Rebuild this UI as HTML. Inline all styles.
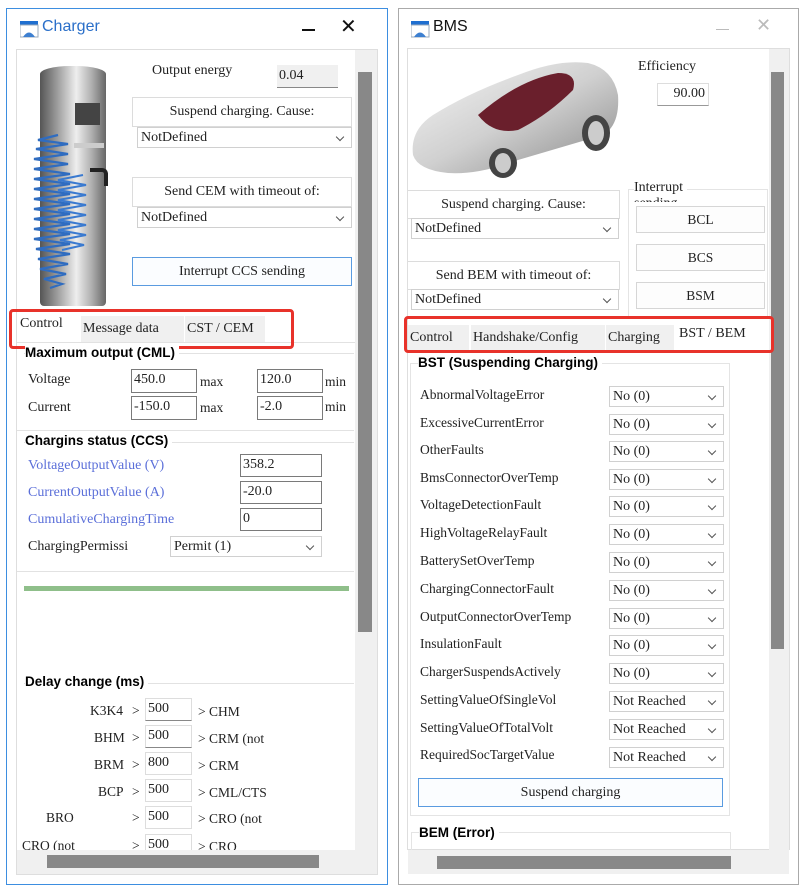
<!DOCTYPE html>
<html><head><meta charset="utf-8"><style>
*{box-sizing:border-box;margin:0;padding:0}
body{width:804px;height:888px;background:#fff;position:relative;overflow:hidden;font-family:"Liberation Serif","Noto Serif CJK SC",serif;font-size:13.5px;color:#222}
.a{position:absolute;white-space:nowrap}
.inp{position:absolute;border:1px solid #7a7a7a;background:#fff;padding:0 2px;line-height:20px;font-size:14px}
.sel{position:absolute;border:1px solid #d0d0d0;background:#fff;padding:0 3px;line-height:19px;font-size:14px}
.sel::after{content:"";position:absolute;right:8px;top:6px;width:5px;height:5px;border-right:1px solid #555;border-bottom:1px solid #555;transform:rotate(45deg)}
.box{position:absolute;border:1px solid #dcdcdc;background:#fff;text-align:center;font-size:14px}
.btn{position:absolute;border:1px solid #d6d6d6;background:#fdfdfd;text-align:center;font-size:13.5px}
.h{position:absolute;font-family:"Liberation Sans",sans-serif;font-weight:bold;font-size:13.5px;background:#fff;padding-right:4px;color:#000}
.ln{position:absolute;height:1px;background:#e2e2e2}
.red{position:absolute;border:3px solid #e8322a;border-radius:4px}
.tab{position:absolute;background:#f0f0f0;line-height:26px;font-size:14px;padding-left:2px}
.blue{color:#5b6fd9}
</style></head><body>

<!-- LEFT WINDOW -->
<div class="a" style="left:6px;top:8px;width:382px;height:877px;border:1px solid #3d8ee0"></div>
<svg class="a" style="left:20px;top:20px" width="19" height="18"><rect x="0" y="1" width="18" height="4" fill="#1f6fd0"/><rect x="0" y="5" width="18" height="12" fill="#fff" stroke="#9ab" stroke-width="1"/><path d="M3 17 Q9 8 15 17Z" fill="#3d7fd0"/></svg>
<div class="a" style="left:42px;top:18px;font-family:'Liberation Sans',sans-serif;font-size:16px;color:#2a6fc9">Charger</div>
<div class="a" style="left:302px;top:29px;width:13px;height:1.5px;background:#111"></div>
<div class="a" style="left:340px;top:14px;font-family:'Liberation Sans',sans-serif;font-size:20px;color:#111">✕</div>
<div class="a" style="left:16px;top:49px;width:362px;height:826px;border:1px solid #dedede;background:#fff"></div>
<!-- charger pole -->
<div class="a" style="left:40px;top:66px;width:66px;height:240px;border-radius:30px 30px 4px 4px/8px 8px 4px 4px;background:linear-gradient(90deg,#555 0%,#999 25%,#eee 55%,#aaa 80%,#666 100%)"></div>
<div class="a" style="left:75px;top:103px;width:25px;height:22px;background:#444"></div>
<div class="a" style="left:74px;top:143px;width:30px;height:5px;background:#ccc"></div>
<div class="a" style="left:90px;top:168px;width:18px;height:18px;border:4px solid #222;border-left:none;border-bottom:none;border-radius:0 6px 0 0"></div>
<svg class="a" style="left:28px;top:130px" width="70" height="165"><path d="M30 5 L10 10 L40 14 L8 19 L40 24 L6 29 L40 34 L6 39 L42 44 L6 49 L42 54 L6 59 L42 64 L6 69 L42 74 L6 79 L42 84 L6 89 L42 94 L6 99 L42 104 L6 109 L42 114 L8 119 L42 124 L10 129 L40 134 L12 139 L38 144 L16 149 L34 154 L22 158" fill="none" stroke="#2f6cc0" stroke-width="2.2"/><path d="M55 45 L30 50 L58 55 L30 60 L58 65 L30 70 L58 75 L30 80 L58 85 L30 90 L58 95 L30 100 L58 105 L32 110 L56 115 L34 120" fill="none" stroke="#3a7ad0" stroke-width="2"/></svg>
<div class="a" style="left:152px;top:63px;font-size:14px">Output energy</div>
<div class="a" style="left:277px;top:65px;width:61px;height:23px;background:#f0f0f0;border-bottom:1px solid #888;font-size:14px;padding:3px 2px">0.04</div>
<div class="box" style="left:132px;top:97px;width:220px;height:30px;line-height:28px">Suspend charging. Cause:</div>
<div class="sel" style="left:137px;top:127px;width:215px;height:21px">NotDefined</div>
<div class="box" style="left:132px;top:177px;width:220px;height:30px;line-height:28px">Send CEM with timeout of:</div>
<div class="sel" style="left:137px;top:207px;width:215px;height:21px">NotDefined</div>
<div class="box" style="left:132px;top:257px;width:220px;height:29px;line-height:27px;border-color:#5a9be0;background:#fbfdff">Interrupt CCS sending</div>
<div class="tab" style="left:18px;top:312px;width:63px;background:#fff;line-height:24px">Control</div>
<div class="tab" style="left:81px;top:316px;width:103px">Message data</div>
<div class="tab" style="left:185px;top:316px;width:80px">CST / CEM</div>
<div class="ln" style="left:17px;top:342px;width:340px"></div>
<div class="red" style="left:9px;top:309px;width:285px;height:40px"></div>
<div class="ln" style="left:24px;top:353px;width:330px"></div>
<div class="h" style="left:25px;top:345px">Maximum output (CML)</div>
<div class="a" style="left:28px;top:372px;font-size:14px">Voltage</div>
<div class="inp" style="left:131px;top:369px;width:66px;height:24px">450.0</div>
<div class="a" style="left:200px;top:374px">max</div>
<div class="inp" style="left:257px;top:369px;width:66px;height:24px">120.0</div>
<div class="a" style="left:325px;top:374px">min</div>
<div class="a" style="left:28px;top:400px;font-size:14px">Current</div>
<div class="inp" style="left:131px;top:396px;width:66px;height:24px">-150.0</div>
<div class="a" style="left:200px;top:400px">max</div>
<div class="inp" style="left:257px;top:396px;width:66px;height:24px">-2.0</div>
<div class="a" style="left:325px;top:399px">min</div>
<div class="ln" style="left:17px;top:430px;width:337px"></div>
<div class="ln" style="left:24px;top:442px;width:330px"></div>
<div class="h" style="left:25px;top:433px">Chargins status (CCS)</div>
<div class="a blue" style="left:28px;top:458px;font-size:14px">VoltageOutputValue (V)</div>
<div class="inp" style="left:240px;top:454px;width:82px;height:23px">358.2</div>
<div class="a blue" style="left:28px;top:485px;font-size:14px">CurrentOutputValue (A)</div>
<div class="inp" style="left:240px;top:481px;width:82px;height:23px">-20.0</div>
<div class="a blue" style="left:28px;top:512px;font-size:14px">CumulativeChargingTime</div>
<div class="inp" style="left:240px;top:508px;width:82px;height:23px">0</div>
<div class="a" style="left:28px;top:539px;font-size:14px">ChargingPermissi</div>
<div class="sel" style="left:170px;top:536px;width:152px;height:21px">Permit (1)</div>
<div class="ln" style="left:17px;top:571px;width:337px"></div>
<div class="a" style="left:24px;top:586px;width:325px;height:5px;background:#8fbf8a"></div>
<div class="ln" style="left:24px;top:683px;width:330px"></div>
<div class="h" style="left:25px;top:674px">Delay change (ms)</div>
<div class="a" style="left:90px;top:703px">K3K4</div>
<div class="a" style="left:94px;top:730px">BHM</div>
<div class="a" style="left:94px;top:757px">BRM</div>
<div class="a" style="left:98px;top:784px">BCP</div>
<div class="a" style="left:46px;top:810px">BRO</div>
<div class="a" style="left:22px;top:838px">CRO (not</div>
<div class="a" style="left:132px;top:703px">&gt;</div><div class="a" style="left:132px;top:730px">&gt;</div><div class="a" style="left:132px;top:757px">&gt;</div><div class="a" style="left:132px;top:784px">&gt;</div><div class="a" style="left:132px;top:810px">&gt;</div><div class="a" style="left:132px;top:838px">&gt;</div>
<div class="inp" style="left:145px;top:698px;width:47px;height:23px;border-color:#ddd #ddd #888 #ddd">500</div>
<div class="inp" style="left:145px;top:725px;width:47px;height:23px;border-color:#ddd #ddd #888 #ddd">500</div>
<div class="inp" style="left:145px;top:752px;width:47px;height:23px;border-color:#ddd">800</div>
<div class="inp" style="left:145px;top:779px;width:47px;height:23px;border-color:#ddd">500</div>
<div class="inp" style="left:145px;top:806px;width:47px;height:23px;border-color:#ddd">500</div>
<div class="inp" style="left:145px;top:834px;width:47px;height:23px;border-color:#ddd">500</div>
<div class="a" style="left:198px;top:704px">&gt; CHM</div>
<div class="a" style="left:198px;top:731px">&gt; CRM (not</div>
<div class="a" style="left:198px;top:758px">&gt; CRM</div>
<div class="a" style="left:198px;top:785px">&gt; CML/CTS</div>
<div class="a" style="left:198px;top:811px">&gt; CRO (not</div>
<div class="a" style="left:198px;top:839px">&gt; CRO</div>
<div class="a" style="left:355px;top:50px;width:22px;height:800px;background:#f0f0f0"></div>
<div class="a" style="left:358px;top:72px;width:14px;height:560px;background:#888"></div>
<div class="a" style="left:17px;top:850px;width:360px;height:24px;background:#f0f0f0"></div>
<div class="a" style="left:47px;top:855px;width:272px;height:13px;background:#888"></div>

<!-- RIGHT WINDOW -->
<div class="a" style="left:398px;top:8px;width:401px;height:877px;border:1px solid #aaa"></div>
<svg class="a" style="left:411px;top:20px" width="19" height="18"><rect x="0" y="1" width="18" height="4" fill="#1f6fd0"/><rect x="0" y="5" width="18" height="12" fill="#fff" stroke="#9ab" stroke-width="1"/><path d="M3 17 Q9 8 15 17Z" fill="#3d7fd0"/></svg>
<div class="a" style="left:433px;top:18px;font-family:'Liberation Sans',sans-serif;font-size:16px;color:#111">BMS</div>
<div class="a" style="left:716px;top:29px;width:13px;height:1px;background:#bbb"></div>
<div class="a" style="left:756px;top:15px;font-family:'Liberation Sans',sans-serif;font-size:18px;color:#bbb">✕</div>
<div class="a" style="left:407px;top:48px;width:383px;height:802px;border:1px solid #dedede;background:#fff"></div>
<!-- car -->
<svg class="a" style="left:408px;top:55px" width="215" height="125">
<defs><linearGradient id="cg" x1="0" y1="0" x2="1" y2="1"><stop offset="0" stop-color="#f6f6f6"/><stop offset=".5" stop-color="#d0d0d0"/><stop offset="1" stop-color="#888"/></linearGradient></defs>
<path d="M5 100 Q2 75 25 60 Q60 38 110 20 Q150 4 180 8 Q205 14 210 40 Q212 70 195 80 L110 105 Q70 120 40 118 Q10 115 5 100Z" fill="url(#cg)"/>
<path d="M70 60 Q110 25 150 18 Q170 18 165 35 Q140 60 110 75 Q85 80 70 60Z" fill="#6a1f2c"/>
<ellipse cx="188" cy="78" rx="14" ry="18" fill="#444"/><ellipse cx="188" cy="78" rx="8" ry="12" fill="#ccc"/>
<ellipse cx="95" cy="108" rx="14" ry="15" fill="#444"/><ellipse cx="95" cy="108" rx="8" ry="10" fill="#ccc"/>
</svg>
<div class="a" style="left:638px;top:59px;font-size:14px">Efficiency</div>
<div class="a" style="left:657px;top:83px;width:52px;height:23px;border:1px solid #ddd;border-bottom-color:#999;font-size:14px;text-align:right;padding:2px 3px">90.00</div>
<div class="box" style="left:408px;top:190px;width:212px;height:29px;line-height:27px;border-left:none">Suspend charging. Cause:</div>
<div class="sel" style="left:411px;top:218px;width:208px;height:21px">NotDefined</div>
<div class="box" style="left:408px;top:261px;width:212px;height:29px;line-height:27px;border-left:none">Send BEM with timeout of:</div>
<div class="sel" style="left:411px;top:289px;width:208px;height:21px">NotDefined</div>
<div class="a" style="left:628px;top:189px;width:140px;height:130px;border:1px solid #e4e4e4;border-bottom:none"></div>
<div class="a" style="left:634px;top:180px;background:#fff;font-size:14px;line-height:16px;height:22px;overflow:hidden;padding-right:4px">Interrupt<br>sending</div>
<div class="btn" style="left:636px;top:206px;width:129px;height:27px;line-height:26px">BCL</div>
<div class="btn" style="left:636px;top:244px;width:129px;height:27px;line-height:26px">BCS</div>
<div class="btn" style="left:636px;top:282px;width:129px;height:27px;line-height:26px">BSM</div>
<div class="tab" style="left:408px;top:325px;width:61px">Control</div>
<div class="tab" style="left:471px;top:325px;width:134px">Handshake/Config</div>
<div class="tab" style="left:606px;top:325px;width:68px">Charging</div>
<div class="tab" style="left:675px;top:322px;width:82px;background:#fff;line-height:24px;padding-left:4px">BST / BEM</div>
<div class="ln" style="left:408px;top:351px;width:360px"></div>
<div class="a" style="left:410px;top:363px;width:320px;height:453px;border:1px solid #e4e4e4"></div>
<div class="h" style="left:418px;top:355px">BST (Suspending Charging)</div>
<div class="a" style="left:420px;top:387px">AbnormalVoltageError</div>
<div class="a" style="left:420px;top:415px">ExcessiveCurrentError</div>
<div class="a" style="left:420px;top:442px">OtherFaults</div>
<div class="a" style="left:420px;top:470px">BmsConnectorOverTemp</div>
<div class="a" style="left:420px;top:497px">VoltageDetectionFault</div>
<div class="a" style="left:420px;top:525px">HighVoltageRelayFault</div>
<div class="a" style="left:420px;top:553px">BatterySetOverTemp</div>
<div class="a" style="left:420px;top:581px">ChargingConnectorFault</div>
<div class="a" style="left:420px;top:609px">OutputConnectorOverTemp</div>
<div class="a" style="left:420px;top:636px">InsulationFault</div>
<div class="a" style="left:420px;top:664px">ChargerSuspendsActively</div>
<div class="a" style="left:420px;top:692px">SettingValueOfSingleVol</div>
<div class="a" style="left:420px;top:720px">SettingValueOfTotalVolt</div>
<div class="a" style="left:420px;top:747px">RequiredSocTargetValue</div>
<div class="sel" style="left:609px;top:386px;width:115px;height:21px">No (0)</div>
<div class="sel" style="left:609px;top:414px;width:115px;height:21px">No (0)</div>
<div class="sel" style="left:609px;top:441px;width:115px;height:21px">No (0)</div>
<div class="sel" style="left:609px;top:469px;width:115px;height:21px">No (0)</div>
<div class="sel" style="left:609px;top:496px;width:115px;height:21px">No (0)</div>
<div class="sel" style="left:609px;top:524px;width:115px;height:21px">No (0)</div>
<div class="sel" style="left:609px;top:552px;width:115px;height:21px">No (0)</div>
<div class="sel" style="left:609px;top:580px;width:115px;height:21px">No (0)</div>
<div class="sel" style="left:609px;top:608px;width:115px;height:21px">No (0)</div>
<div class="sel" style="left:609px;top:635px;width:115px;height:21px">No (0)</div>
<div class="sel" style="left:609px;top:663px;width:115px;height:21px">No (0)</div>
<div class="sel" style="left:609px;top:691px;width:115px;height:21px">Not Reached</div>
<div class="sel" style="left:609px;top:719px;width:115px;height:21px">Not Reached</div>
<div class="sel" style="left:609px;top:747px;width:115px;height:21px">Not Reached</div>
<div class="box" style="left:418px;top:778px;width:305px;height:29px;line-height:27px;border-color:#5a9be0;background:#fbfdff">Suspend charging</div>
<div class="a" style="left:411px;top:832px;width:320px;height:20px;border:1px solid #e4e4e4;border-bottom:none"></div>
<div class="h" style="left:419px;top:825px">BEM (Error)</div>
<div class="a" style="left:769px;top:49px;width:20px;height:801px;background:#f0f0f0"></div>
<div class="a" style="left:771px;top:72px;width:13px;height:577px;background:#888"></div>
<div class="red" style="left:404px;top:316px;width:370px;height:37px"></div>
<div class="a" style="left:408px;top:850px;width:381px;height:24px;background:#f0f0f0"></div>
<div class="a" style="left:437px;top:856px;width:294px;height:13px;background:#888"></div>
</body></html>
